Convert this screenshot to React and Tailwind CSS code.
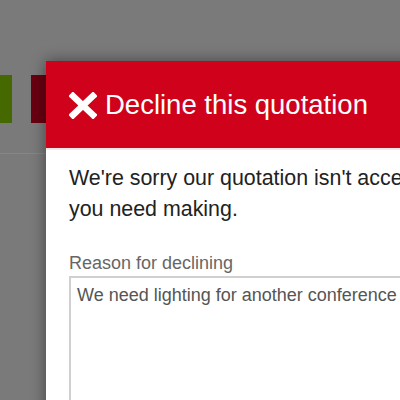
export default function App() {
  return (
    <div
      className="relative w-[400px] h-[400px] overflow-hidden bg-[#7a7a7a]"
      style={{ fontFamily: '"Liberation Sans", Arial, sans-serif' }}
    >
      {/* page behind the overlay */}
      <div className="pt-[75px]">
        <div className="flex h-[48px]">
          <div className="w-[12px] bg-[#456800]" />
          <div className="ml-[19px] w-[16px] bg-[#690012]" />
        </div>
        <div className="mt-[30px] h-px bg-[#868686]" />
      </div>

      {/* modal */}
      <div className="absolute left-[46px] top-[61px] w-[820px] bg-white shadow-[0_0_14px_rgba(0,0,0,0.45)]">
        <div className="flex h-[87px] items-center gap-2 bg-[#d0021b] pl-[23px] pt-[1px]">
          <svg width="28" height="27" viewBox="0 0 28 27" className="shrink-0">
            <path d="M4 4 L24 23 M24 4 L4 23" stroke="white" strokeWidth="6.5" strokeLinecap="square" />
          </svg>
          <h2 className="text-[27.5px] leading-none text-white">Decline this quotation</h2>
        </div>
        <div className="h-[2px] bg-[#f6e6e8]" />
        <div className="px-[23px] pt-[13px]">
          <p className="text-[21.4px] leading-[31px] text-[#222] whitespace-nowrap">
            We're sorry our quotation isn't acceptable. Please let us know what changes
            <br />
            you need making.
          </p>
          <label className="mt-[26px] block text-[18px] leading-[24px] text-[#666]">
            Reason for declining
          </label>
          <div className="mt-px h-[160px] w-[560px] border-2 border-[#d0d0d0] px-[6px] pt-[5px] text-[18px] leading-[24px] text-[#555] whitespace-nowrap">
            We need lighting for another conference instead
          </div>
        </div>
      </div>
    </div>
  );
}
